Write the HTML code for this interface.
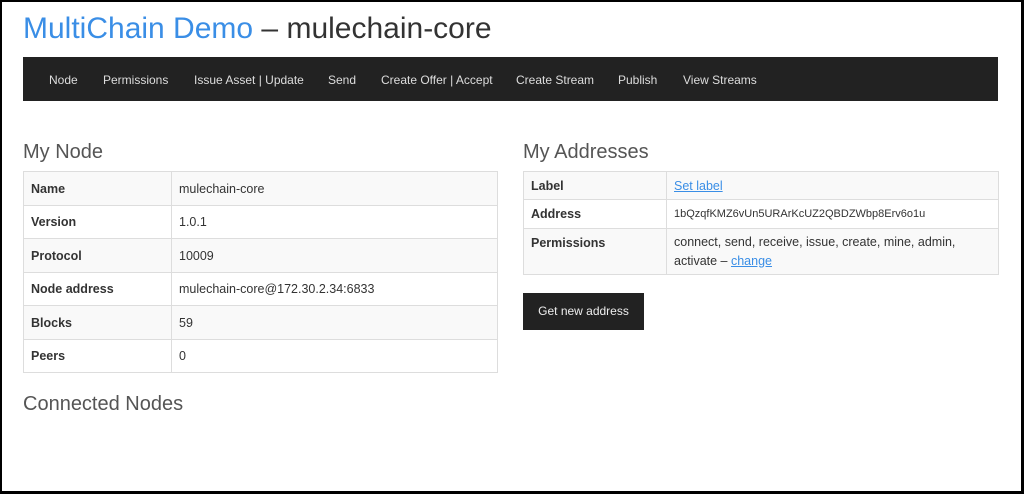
<!DOCTYPE html>
<html><head><style>
*{margin:0;padding:0;box-sizing:border-box}
body{width:1024px;height:494px;background:#000;font-family:"Liberation Sans",sans-serif;color:#333;overflow:hidden;position:relative}
.page{position:absolute;left:2px;top:2px;width:1019px;height:489px;background:#fff}
h1{position:absolute;left:23px;top:12px;font-size:30px;font-weight:normal;color:#333;white-space:nowrap;letter-spacing:0px}
h1 span{color:#3a8ee6}
.nav{position:absolute;left:23px;top:57px;width:975px;height:44px;background:#222}
.nav a{position:absolute;top:16px;font-size:12px;color:#ddd;white-space:nowrap}
h2{position:absolute;font-size:20px;font-weight:normal;color:#555}
table{position:absolute;border-collapse:collapse;font-size:12.5px}
td{border:1px solid #ddd;padding:0 7px;vertical-align:middle}
td:first-child{font-weight:bold;color:#333}
tr:nth-child(odd){background:#f9f9f9}
a.l{color:#3a8ee6;text-decoration:underline}
.btn{position:absolute;left:523px;top:293px;width:121px;height:37px;background:#222;color:#eee;font-size:12px;line-height:37px;text-align:center}
</style></head><body>
<div class="page"></div>
<h1><span>MultiChain Demo</span> – mulechain-core</h1>
<div class="nav">
<a style="left:26px">Node</a>
<a style="left:80px">Permissions</a>
<a style="left:171px">Issue Asset | Update</a>
<a style="left:305px">Send</a>
<a style="left:358px">Create Offer | Accept</a>
<a style="left:493px">Create Stream</a>
<a style="left:595px">Publish</a>
<a style="left:660px">View Streams</a>
</div>
<h2 style="left:23px;top:141px">My Node</h2>
<table style="left:23px;top:171px;width:475px">
<tr style="height:34px"><td style="width:148px">Name</td><td>mulechain-core</td></tr>
<tr style="height:33px"><td>Version</td><td>1.0.1</td></tr>
<tr style="height:34px"><td>Protocol</td><td>10009</td></tr>
<tr style="height:33px"><td>Node address</td><td>mulechain-core@172.30.2.34:6833</td></tr>
<tr style="height:34px"><td>Blocks</td><td>59</td></tr>
<tr style="height:33px"><td>Peers</td><td>0</td></tr>
</table>
<h2 style="left:523px;top:141px">My Addresses</h2>
<table style="left:523px;top:171px;width:476px">
<tr style="height:28px"><td style="width:143px">Label</td><td><a class="l">Set label</a></td></tr>
<tr style="height:29px;background:#fff"><td>Address</td><td style="font-size:11px">1bQzqfKMZ6vUn5URArKcUZ2QBDZWbp8Erv6o1u</td></tr>
<tr style="height:46px"><td style="vertical-align:top;padding-top:7px">Permissions</td><td style="line-height:19px;padding-top:3px;padding-bottom:3px">connect, send, receive, issue, create, mine, admin, activate – <a class="l">change</a></td></tr>
</table>
<div class="btn">Get new address</div>
<h2 style="left:23px;top:393px">Connected Nodes</h2>
</body></html>
